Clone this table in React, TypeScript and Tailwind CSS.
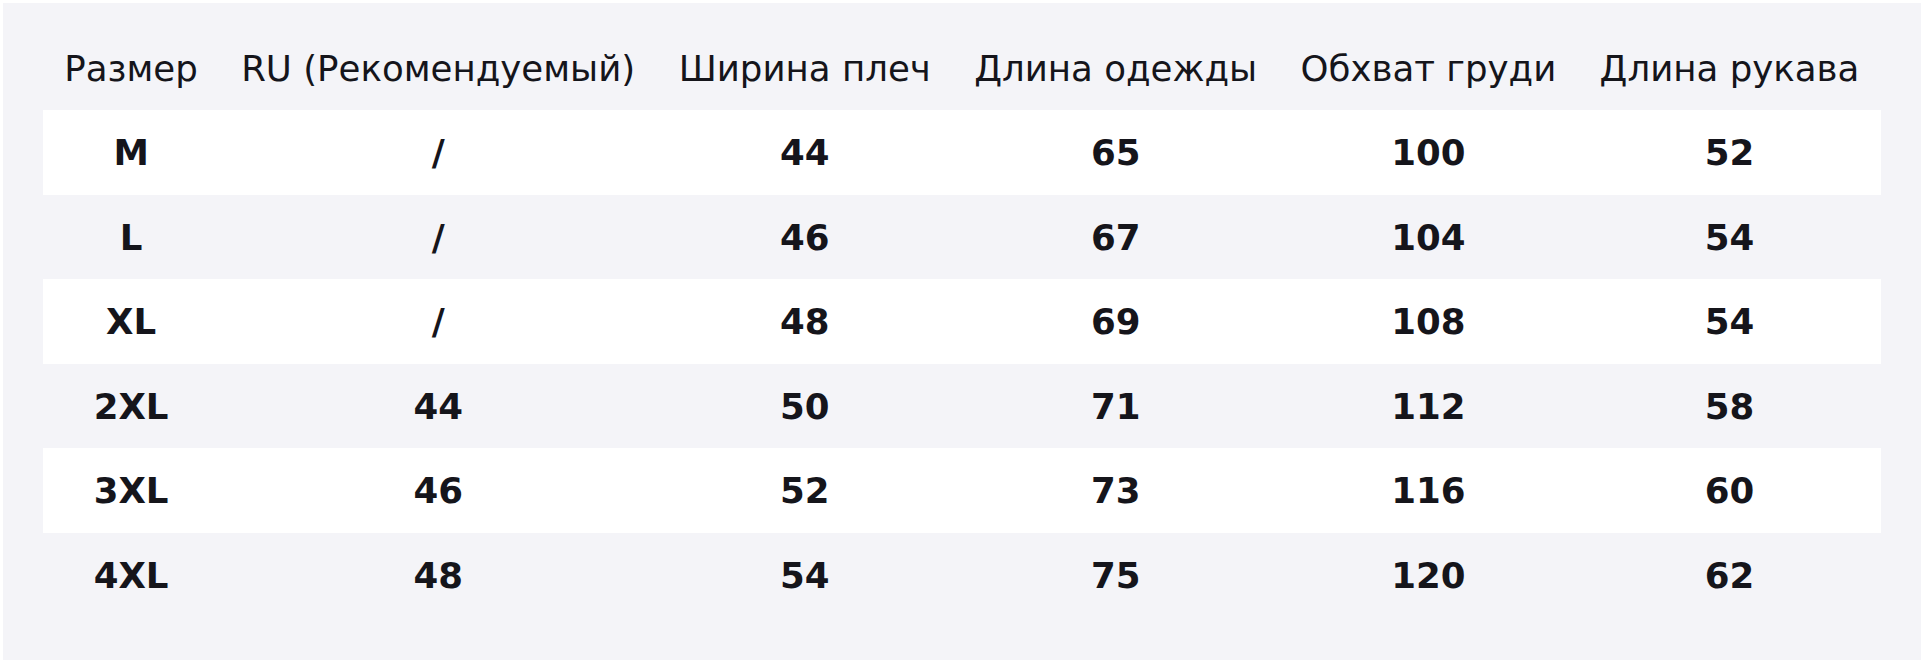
import React from "react";

const headers = [
  "Размер",
  "RU (Рекомендуемый)",
  "Ширина плеч",
  "Длина одежды",
  "Обхват груди",
  "Длина рукава",
];

const rows: string[][] = [
  ["M", "/", "44", "65", "100", "52"],
  ["L", "/", "46", "67", "104", "54"],
  ["XL", "/", "48", "69", "108", "54"],
  ["2XL", "44", "50", "71", "112", "58"],
  ["3XL", "46", "52", "73", "116", "60"],
  ["4XL", "48", "54", "75", "120", "62"],
];

export default function App() {
  return (
    <div className="w-[1924px] h-[663px] bg-white p-[3px] overflow-hidden">
      <div
        className="bg-[#f4f4f8] p-[40px] h-[657px] text-[#15151b]"
        style={{ fontFamily: '"DejaVu Sans", "Noto Sans", sans-serif' }}
      >
        <table className="w-full border-collapse text-[35.6px] leading-[41px]">
          <thead>
            <tr>
              {headers.map((h) => (
                <th
                  key={h}
                  className="font-normal whitespace-nowrap px-[21px] pt-[5px] pb-[21px] text-center align-top"
                >
                  {h}
                </th>
              ))}
            </tr>
          </thead>
          <tbody>
            {rows.map((r, i) => (
              <tr key={i} className={i % 2 === 0 ? "bg-white" : "bg-transparent"}>
                {r.map((c, j) => (
                  <td
                    key={j}
                    className="font-bold text-center whitespace-nowrap px-[21px] pt-[1px] pb-0 h-[84.5px] align-middle"
                  >
                    {c}
                  </td>
                ))}
              </tr>
            ))}
          </tbody>
        </table>
      </div>
    </div>
  );
}
